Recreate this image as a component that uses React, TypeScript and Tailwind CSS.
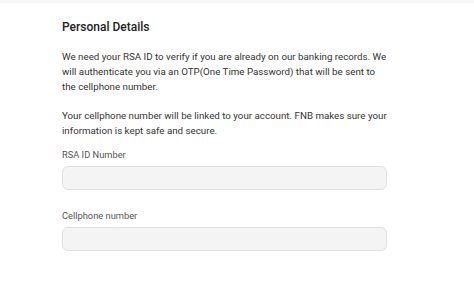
import React from 'react';

const Field = ({ label }: { label: string }) => (
  <div className="flex flex-col">
    <label className="text-[9.3px] leading-[12px] text-[#555]">{label}</label>
    <input
      type="text"
      className="mt-[5px] h-[24px] w-full rounded-[6px] border border-[#e0e0e0] bg-[#f4f4f4] outline-none"
    />
  </div>
);

export default function App() {
  return (
    <div
      className="min-h-screen w-full bg-white"
      style={{ fontFamily: 'Roboto, "Liberation Sans", sans-serif' }}
    >
      <div className="h-[3px] w-full bg-[#f6f6f6]" />
      <div className="pl-[62px] pt-[15px]">
        <div className="w-[325px]">
          <h2 className="text-[12px] leading-[18px] font-medium text-[#222]">
            Personal Details
          </h2>
          <p className="mt-[14px] text-[9.75px] leading-[14.8px] text-[#333] whitespace-nowrap">
            We need your RSA ID to verify if you are already on our banking records. We
            <br />
            will authenticate you via an OTP(One Time Password) that will be sent to
            <br />
            the cellphone number.
          </p>
          <p className="mt-[15px] text-[9.75px] leading-[14.8px] text-[#333] whitespace-nowrap">
            Your cellphone number will be linked to your account. FNB makes sure your
            <br />
            information is kept safe and secure.
          </p>
          <div className="mt-[10px] flex flex-col gap-[20px]">
            <Field label="RSA ID Number" />
            <Field label="Cellphone number" />
          </div>
        </div>
      </div>
    </div>
  );
}
